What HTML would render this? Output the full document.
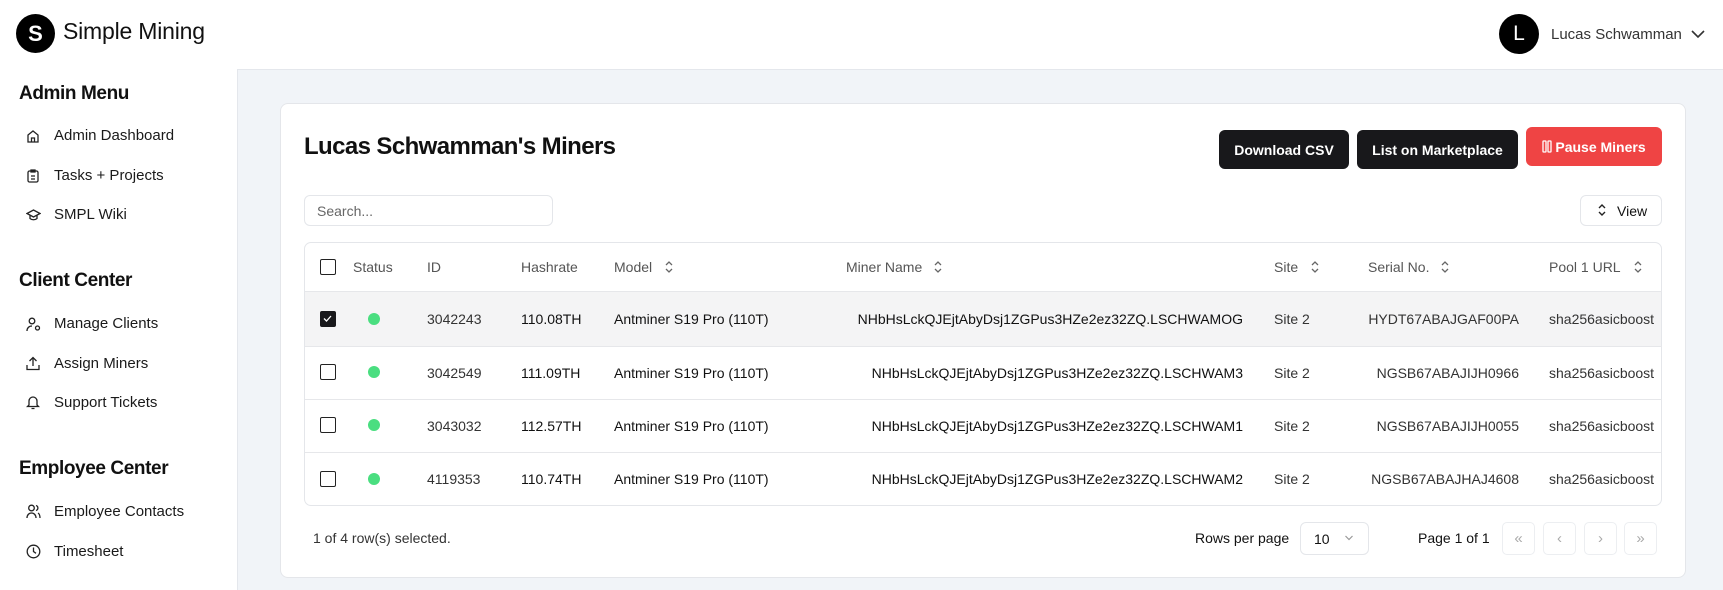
<!DOCTYPE html>
<html><head><meta charset="utf-8"><style>
*{box-sizing:border-box;margin:0;padding:0}
body{width:1723px;height:590px;overflow:hidden;background:#fff;font-family:"Liberation Sans",sans-serif;color:#111;position:relative;font-size:14px}
.a{position:absolute;white-space:nowrap}
.main{position:absolute;left:237px;top:69px;right:0;bottom:0;background:#f1f4f8;border-top:1px solid #e4e7ec;border-left:1px solid #e4e7ec}
.card{position:absolute;left:280px;top:103px;width:1406px;height:475px;background:#fff;border:1px solid #e4e6ea;border-radius:8px}
.sh{font-size:19px;font-weight:bold;letter-spacing:-0.4px}
.it{font-size:15px;color:#1a1a1a}
.btn{position:absolute;background:#18181b;color:#fff;font-weight:bold;font-size:14px;border-radius:6px;display:flex;align-items:center;justify-content:center}
.cb{position:absolute;width:16px;height:16px;border:1.5px solid #222;border-radius:2px;background:#fff}
.dot{position:absolute;width:12px;height:12px;border-radius:50%;background:#4ade80}
.th{color:#555;font-size:14px}
.hl{position:absolute;left:305px;width:1357px;height:1px;background:#e6e7ea}
.pb{position:absolute;top:522px;width:33px;height:33px;border:1px solid #eceef1;border-radius:5px;color:#aaa;display:flex;align-items:center;justify-content:center;font-size:15px}
</style></head><body>
<!-- header -->
<div class="a" style="left:16px;top:14px;width:39px;height:39px;border-radius:50%;background:#000;color:#fff;font-weight:bold;font-size:22px;display:flex;align-items:center;justify-content:center">S</div>
<div class="a" style="left:63px;top:18px;font-size:23px;font-weight:500;letter-spacing:-0.2px">Simple Mining</div>
<div class="a" style="left:1499px;top:14px;width:40px;height:40px;border-radius:50%;background:#000;color:#fff;font-size:21px;display:flex;align-items:center;justify-content:center">L</div>
<div class="a" style="left:1551px;top:26px;font-size:15px;color:#333">Lucas Schwamman</div>
<svg class="a" style="left:1690px;top:27px" width="16" height="14" viewBox="0 0 16 14"><path d="M2 4l6 6 6-6" fill="none" stroke="#333" stroke-width="1.6"/></svg>
<!-- sidebar -->
<div class="a sh" style="left:19px;top:83px">Admin Menu</div>
<svg class="a" style="left:26px;top:129px" width="14" height="14" viewBox="0 0 14 14" fill="none" stroke="#222" stroke-width="1.3"><path d="M2 6L7 2l5 4v7H2z M5.5 13V9h3v4"/></svg>
<div class="a it" style="left:54px;top:127px">Admin Dashboard</div>
<svg class="a" style="left:27px;top:169px" width="12" height="14" viewBox="0 0 12 14" fill="none" stroke="#222" stroke-width="1.3"><rect x="1" y="2" width="10" height="11" rx="1.5"/><path d="M4 1h4v2H4z M4 7h4 M4 10h4"/></svg>
<div class="a it" style="left:54px;top:167px">Tasks + Projects</div>
<svg class="a" style="left:26px;top:209px" width="15" height="12" viewBox="0 0 15 12" fill="none" stroke="#222" stroke-width="1.3"><path d="M1 4.5L7.5 1 14 4.5 7.5 8z M4 6v3.5c2 1.7 5 1.7 7 0V6"/></svg>
<div class="a it" style="left:54px;top:206px">SMPL Wiki</div>
<div class="a sh" style="left:19px;top:270px">Client Center</div>
<svg class="a" style="left:26px;top:317px" width="15" height="15" viewBox="0 0 15 15" fill="none" stroke="#222" stroke-width="1.3"><circle cx="6" cy="4" r="2.8"/><path d="M1 14c0-3 2-5 5-5"/><circle cx="11.5" cy="11" r="2"/></svg>
<div class="a it" style="left:54px;top:315px">Manage Clients</div>
<svg class="a" style="left:26px;top:356px" width="14" height="15" viewBox="0 0 14 15" fill="none" stroke="#222" stroke-width="1.3"><path d="M7 10V1.5 M3.5 5L7 1.5 10.5 5 M1 9v4.5h12V9"/></svg>
<div class="a it" style="left:54px;top:355px">Assign Miners</div>
<svg class="a" style="left:26px;top:395px" width="14" height="15" viewBox="0 0 14 15" fill="none" stroke="#222" stroke-width="1.3"><path d="M3 10V6a4 4 0 0 1 8 0v4l1.5 1.5h-11z M5.5 13.5h3"/></svg>
<div class="a it" style="left:54px;top:394px">Support Tickets</div>
<div class="a sh" style="left:19px;top:458px">Employee Center</div>
<svg class="a" style="left:26px;top:504px" width="15" height="15" viewBox="0 0 15 15" fill="none" stroke="#222" stroke-width="1.3"><circle cx="5.5" cy="4" r="2.8"/><path d="M1 14c0-3 2-5 4.5-5s4.5 2 4.5 5 M10 1.5a2.6 2.6 0 0 1 0 5 M12 9c1.3.8 2 2.5 2 5"/></svg>
<div class="a it" style="left:54px;top:503px">Employee Contacts</div>
<svg class="a" style="left:26px;top:544px" width="15" height="15" viewBox="0 0 15 15" fill="none" stroke="#222" stroke-width="1.3"><circle cx="7.5" cy="7.5" r="6.3"/><path d="M7.5 3.5v4l2.5 1.8"/></svg>
<div class="a it" style="left:54px;top:543px">Timesheet</div>
<!-- main -->
<div class="main"></div>
<div class="card"></div>
<div class="a" style="left:304px;top:133px;font-size:24px;font-weight:bold;letter-spacing:-0.6px">Lucas Schwamman's Miners</div>
<div class="btn" style="left:1219px;top:130px;width:130px;height:39px">Download CSV</div>
<div class="btn" style="left:1357px;top:130px;width:161px;height:39px">List on Marketplace</div>
<div class="btn" style="left:1526px;top:127px;width:136px;height:39px;background:#ef4444">
<svg width="10" height="13" viewBox="0 0 10 13" style="margin-right:3px" fill="none" stroke="#fff" stroke-width="1.3"><rect x="1" y="1" width="3" height="11" rx=".5"/><rect x="6" y="1" width="3" height="11" rx=".5"/></svg>Pause Miners</div>
<div class="a" style="left:304px;top:195px;width:249px;height:31px;border:1px solid #e4e6ea;border-radius:6px;color:#666;font-size:14px;padding:7px 12px">Search...</div>
<div class="a" style="left:1580px;top:195px;width:82px;height:31px;border:1px solid #e4e6ea;border-radius:6px;font-size:14px;padding:7px 0 0 36px">View</div>
<svg class="a" style="left:1597px;top:203px" width="10" height="14" viewBox="0 0 10 14" fill="none" stroke="#222" stroke-width="1.4"><path d="M2 5l3-3 3 3 M2 9l3 3 3-3"/></svg>
<!-- table -->
<div class="a" style="left:304px;top:242px;width:1358px;height:264px;border:1px solid #e4e6ea;border-radius:7px;overflow:hidden">
<div style="position:absolute;left:0;top:49px;width:100%;height:55px;background:#f4f4f5"></div>
</div>
<div class="hl" style="top:291px"></div>
<div class="hl" style="top:346px"></div>
<div class="hl" style="top:399px"></div>
<div class="hl" style="top:452px"></div>
<!-- header -->
<div class="cb" style="left:320px;top:259px"></div>
<div class="a th" style="left:353px;top:259px">Status</div>
<div class="a th" style="left:427px;top:259px">ID</div>
<div class="a th" style="left:521px;top:259px">Hashrate</div>
<div class="a th" style="left:614px;top:259px">Model</div>
<div class="a th" style="left:846px;top:259px">Miner Name</div>
<div class="a th" style="left:1274px;top:259px">Site</div>
<div class="a th" style="left:1368px;top:259px">Serial No.</div>
<div class="a th" style="left:1549px;top:259px">Pool 1 URL</div>
<svg class="a" style="left:664px;top:260px" width="10" height="14" viewBox="0 0 10 14" fill="none" stroke="#666" stroke-width="1.3"><path d="M2 5l3-3 3 3 M2 9l3 3 3-3"/></svg>
<svg class="a" style="left:933px;top:260px" width="10" height="14" viewBox="0 0 10 14" fill="none" stroke="#666" stroke-width="1.3"><path d="M2 5l3-3 3 3 M2 9l3 3 3-3"/></svg>
<svg class="a" style="left:1310px;top:260px" width="10" height="14" viewBox="0 0 10 14" fill="none" stroke="#666" stroke-width="1.3"><path d="M2 5l3-3 3 3 M2 9l3 3 3-3"/></svg>
<svg class="a" style="left:1440px;top:260px" width="10" height="14" viewBox="0 0 10 14" fill="none" stroke="#666" stroke-width="1.3"><path d="M2 5l3-3 3 3 M2 9l3 3 3-3"/></svg>
<svg class="a" style="left:1633px;top:260px" width="10" height="14" viewBox="0 0 10 14" fill="none" stroke="#666" stroke-width="1.3"><path d="M2 5l3-3 3 3 M2 9l3 3 3-3"/></svg>
<!-- rows -->
<div class="cb" style="left:320px;top:311px;background:#18181b;border-color:#18181b"><svg width="13" height="13" viewBox="0 0 13 13" style="position:absolute;left:0;top:0"><path d="M3 6.5l2.5 2.5L10 4" fill="none" stroke="#fff" stroke-width="1.3"/></svg></div>
<div class="dot" style="left:368px;top:313px"></div>
<div class="a" style="left:427px;top:311px;color:#333">3042243</div>
<div class="a" style="left:521px;top:311px;font-weight:500">110.08TH</div>
<div class="a" style="left:614px;top:311px">Antminer S19 Pro (110T)</div>
<div class="a" style="right:480px;top:311px">NHbHsLckQJEjtAbyDsj1ZGPus3HZe2ez32ZQ.LSCHWAMOG</div>
<div class="a" style="left:1274px;top:311px;color:#333">Site 2</div>
<div class="a" style="right:204px;top:311px;color:#333">HYDT67ABAJGAF00PA</div>
<div class="a" style="left:1549px;top:311px;color:#333;width:113px;overflow:hidden">sha256asicboost</div>

<div class="cb" style="left:320px;top:364px"></div>
<div class="dot" style="left:368px;top:366px"></div>
<div class="a" style="left:427px;top:365px;color:#333">3042549</div>
<div class="a" style="left:521px;top:365px;font-weight:500">111.09TH</div>
<div class="a" style="left:614px;top:365px">Antminer S19 Pro (110T)</div>
<div class="a" style="right:480px;top:365px">NHbHsLckQJEjtAbyDsj1ZGPus3HZe2ez32ZQ.LSCHWAM3</div>
<div class="a" style="left:1274px;top:365px;color:#333">Site 2</div>
<div class="a" style="right:204px;top:365px;color:#333">NGSB67ABAJIJH0966</div>
<div class="a" style="left:1549px;top:365px;color:#333;width:113px;overflow:hidden">sha256asicboost</div>

<div class="cb" style="left:320px;top:417px"></div>
<div class="dot" style="left:368px;top:419px"></div>
<div class="a" style="left:427px;top:418px;color:#333">3043032</div>
<div class="a" style="left:521px;top:418px;font-weight:500">112.57TH</div>
<div class="a" style="left:614px;top:418px">Antminer S19 Pro (110T)</div>
<div class="a" style="right:480px;top:418px">NHbHsLckQJEjtAbyDsj1ZGPus3HZe2ez32ZQ.LSCHWAM1</div>
<div class="a" style="left:1274px;top:418px;color:#333">Site 2</div>
<div class="a" style="right:204px;top:418px;color:#333">NGSB67ABAJIJH0055</div>
<div class="a" style="left:1549px;top:418px;color:#333;width:113px;overflow:hidden">sha256asicboost</div>

<div class="cb" style="left:320px;top:471px"></div>
<div class="dot" style="left:368px;top:473px"></div>
<div class="a" style="left:427px;top:471px;color:#333">4119353</div>
<div class="a" style="left:521px;top:471px;font-weight:500">110.74TH</div>
<div class="a" style="left:614px;top:471px">Antminer S19 Pro (110T)</div>
<div class="a" style="right:480px;top:471px">NHbHsLckQJEjtAbyDsj1ZGPus3HZe2ez32ZQ.LSCHWAM2</div>
<div class="a" style="left:1274px;top:471px;color:#333">Site 2</div>
<div class="a" style="right:204px;top:471px;color:#333">NGSB67ABAJHAJ4608</div>
<div class="a" style="left:1549px;top:471px;color:#333;width:113px;overflow:hidden">sha256asicboost</div>
<!-- footer -->
<div class="a" style="left:313px;top:530px;color:#333">1 of 4 row(s) selected.</div>
<div class="a" style="left:1195px;top:530px;font-weight:500">Rows per page</div>
<div class="a" style="left:1300px;top:522px;width:69px;height:33px;border:1px solid #e4e6ea;border-radius:6px;padding:8px 0 0 13px">10</div>
<svg class="a" style="left:1344px;top:534px" width="10" height="8" viewBox="0 0 10 8"><path d="M1.5 2l3.5 3.5L8.5 2" fill="none" stroke="#999" stroke-width="1.2"/></svg>
<div class="a" style="left:1418px;top:530px;font-weight:500">Page 1 of 1</div>
<div class="pb" style="left:1502px">«</div>
<div class="pb" style="left:1543px">‹</div>
<div class="pb" style="left:1584px">›</div>
<div class="pb" style="left:1624px">»</div>
</body></html>
